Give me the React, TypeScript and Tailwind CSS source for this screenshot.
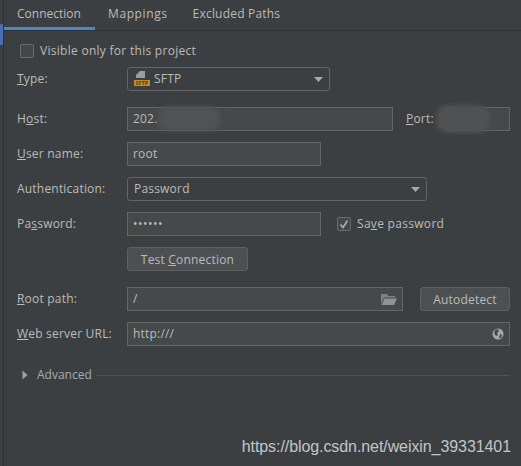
import type { ReactNode } from "react";

const fieldClass =
  "flex h-6 items-center border border-[#646464] bg-[#45494a] pl-[5px] pr-[5px] text-[#bbbbbb]";
const comboClass =
  "flex h-6 items-center justify-between rounded-[3px] border border-[#646464] bg-[#3c3f41] pl-[6px] pr-[6px] text-[#bbbbbb]";
const buttonClass =
  "flex h-6 items-center justify-center rounded-[3px] border border-[#5e6060] bg-[#4c5052] pt-px text-[#bbbbbb]";

function Row({ label, children, className = "" }: { label: ReactNode; children: ReactNode; className?: string }) {
  return (
    <div className={`flex items-center ${className}`}>
      <div className="w-[110px] shrink-0 text-[#bbbbbb]">{label}</div>
      {children}
    </div>
  );
}

function Arrow() {
  return (
    <svg width="9" height="5" viewBox="0 0 9 5">
      <path d="M0 0h9L4.5 5z" fill="#a9a9a9" />
    </svg>
  );
}

export default function App() {
  return (
    <div className="relative h-[466px] w-[521px] overflow-hidden bg-[#3c3f41] font-['Open_Sans',sans-serif] text-[12px] leading-4 tracking-[0.2px]">
      {/* left strip of the settings tree */}
      <div className="absolute left-0 top-[24px] h-[21px] w-[3px] bg-[#4b6eaf]" />
      <div className="ml-[3px] h-full border-l border-[#323232]">
        <div className="flex h-[31px] items-start border-b border-[#323232] text-[#bbbbbb]">
          <div className="h-[30px] w-[91px] border-b-[3px] border-[#4a88c7] pl-[13px] pt-[6px] tracking-normal">Connection</div>
          <div className="pl-[13px] pt-[6px] tracking-[0.6px]">Mappings</div>
          <div className="pl-[25px] pt-[6px] tracking-[0.2px]">Excluded Paths</div>
        </div>

        <div className="pl-[13px] pr-[11px]">
          <div className="mt-[12px] flex items-center pl-[3px] text-[#bbbbbb]">
            <div className="h-[14px] w-[14px] rounded-[2px] border border-[#6b6b6b] bg-[#43494a]" />
            <span className="ml-[6px] tracking-[0.28px]">Visible only for this project</span>
          </div>

          <Row className="mt-[8px]" label={<><u>T</u>ype:</>}>
            <div className={`${comboClass} w-[203px]`}>
              <div className="flex items-center gap-[4px]">
                <svg width="16" height="16" viewBox="0 0 16 16">
                  <path d="M6 0h5v7H2V4z" fill="#9a9c9e" />
                  <rect x="0" y="9" width="16" height="6" fill="#c08a2e" />
                  <text x="8" y="14" textAnchor="middle" fontSize="5" fontWeight="700" fill="#4e3a18">SFTP</text>
                </svg>
                <span>SFTP</span>
              </div>
              <Arrow />
            </div>
          </Row>

          <Row className="mt-[16px]" label={<>H<u>o</u>st:</>}>
            <div className={`${fieldClass} w-[266px]`}>202.</div>
            <span className="ml-[13px] text-[#bbbbbb]"><u>P</u>ort:</span>
            <div className={`${fieldClass} ml-[12px] w-[64px]`} />
          </Row>

          <Row className="mt-[11px]" label={<><u>U</u>ser name:</>}>
            <div className={`${fieldClass} w-[194px]`}>root</div>
          </Row>

          <Row className="mt-[11px]" label="Authentication:">
            <div className={`${comboClass} w-[300px]`}>
              <span>Password</span>
              <Arrow />
            </div>
          </Row>

          <Row className="mt-[11px]" label={<>Pa<u>s</u>sword:</>}>
            <div className={`${fieldClass} w-[194px] tracking-[0.5px]`}>••••••</div>
            <div className="ml-[16px] flex h-[14px] w-[14px] items-center justify-center rounded-[2px] border border-[#6b6b6b] bg-[#43494a]">
              <svg width="10" height="10" viewBox="0 0 10 10">
                <path d="M1.5 5.5 4 8.5 8.5 1.5" fill="none" stroke="#a7a7a7" strokeWidth="1.8" />
              </svg>
            </div>
            <span className="ml-[6px] text-[#bbbbbb] tracking-[0.3px]">Sa<u>v</u>e password</span>
          </Row>

          <div className="mt-[11px] pl-[110px]">
            <div className={`${buttonClass} w-[121px]`}>
              <span>Test <u>C</u>onnection</span>
            </div>
          </div>

          <Row className="mt-[16px]" label={<><u>R</u>oot path:</>}>
            <div className={`${fieldClass} w-[276px] justify-between`}>
              <span>/</span>
              <svg width="16" height="13" viewBox="0 0 16 13">
                <path d="M0 1h6l1.5 2H14v1.5H3L0 11z" fill="#7f8284" />
                <path d="M3.5 5.5H16L13 12H0.5z" fill="#8f9294" />
              </svg>
            </div>
            <div className={`${buttonClass} ml-[17px] w-[90px]`}>Autodetect</div>
          </Row>

          <Row className="mt-[11px]" label={<><u>W</u>eb server URL:</>}>
            <div className={`${fieldClass} w-[383px] justify-between`}>
              <span>http:///</span>
              <svg width="12" height="12" viewBox="0 0 12 12">
                <circle cx="6" cy="6" r="5.5" fill="#a5a7a9" />
                <path d="M3 2 6 1 7 3 5 5 6 7 4 8 2 5zM8 6l2 1-1 3-2 0z" fill="#45494a" />
              </svg>
            </div>
          </Row>

          <div className="mt-[21px] flex items-center text-[#a9a9a9]">
            <svg className="ml-[5px]" width="6" height="10" viewBox="0 0 6 10">
              <path d="M0.5 0.5v9L5.5 5z" fill="#a0a0a0" />
            </svg>
            <span className="ml-[9px] tracking-normal">Advanced</span>
            <div className="ml-[4px] h-px flex-1 bg-[#515151]" />
          </div>
        </div>
      </div>

      {/* blurred-out host and port values */}
      <div className="absolute left-[158px] top-[106px] h-[25px] w-[62px] rounded-[10px] bg-[#505253] blur-[2px]" />
      <div className="absolute left-[436px] top-[105px] h-[28px] w-[54px] rounded-[12px] bg-[#4f5152] blur-[2px]" />

      {/* watermark */}
      <div className="absolute bottom-[9px] right-[10px] font-['Liberation_Sans',sans-serif] text-[16px] leading-5 tracking-[-0.08px] text-[#c4c4c4]">
        https://blog.csdn.net/weixin_39331401
      </div>
    </div>
  );
}
